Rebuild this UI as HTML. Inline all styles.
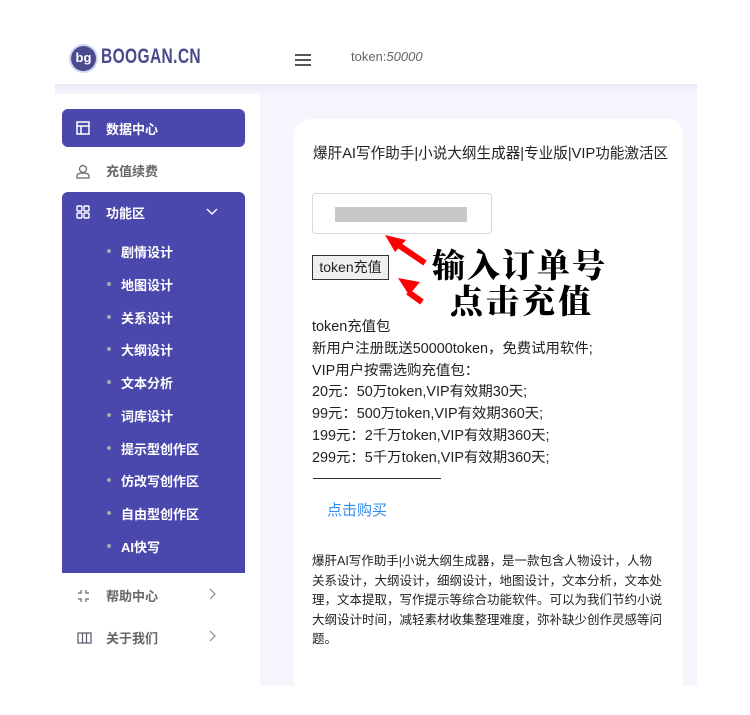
<!DOCTYPE html>
<html><head><meta charset="utf-8"><style>
*{margin:0;padding:0;box-sizing:border-box}
body{width:750px;height:715px;background:#fff;position:relative;overflow:hidden;font-family:"Liberation Sans","Noto Sans CJK SC",sans-serif;color:#222}
.a{position:absolute;white-space:nowrap}
.side{font-size:13px;font-weight:bold}
.sub{color:#fff;font-size:13px;font-weight:bold}
.dot{position:absolute;width:4px;height:4px;border-radius:2px;background:#aaa}
.t{font-size:14.4px;color:#222}
</style></head><body>
<div class="a" style="left:55px;top:84px;width:642px;height:10px;background:linear-gradient(#e9eaf3,#f5f6fd)"></div>
<div class="a" style="left:260px;top:94px;width:437px;height:592px;background:#f5f6fd"></div>
<div class="a" style="left:71px;top:46px;width:25px;height:25px;border-radius:50%;background:#4a4a8c;box-shadow:0 0 0 2px #cfd8f5;color:#fff;font-size:13px;font-weight:bold;text-align:center;line-height:24px">bg</div>
<div class="a" style="left:101px;top:45px;font-size:21px;font-weight:bold;color:#4a4a8c;transform:scaleX(.74);transform-origin:left;letter-spacing:0.5px">BOOGAN.CN</div>
<div class="a" style="left:295px;top:54px;width:16px;height:2px;background:#555;box-shadow:0 5px 0 #555,0 10px 0 #555"></div>
<div class="a" style="left:351px;top:49px;font-size:13px;color:#666">token:<i>50000</i></div>
<div class="a" style="left:62px;top:109px;width:183px;height:38px;background:#4a48ad;border-radius:6px"></div>
<svg class="a" style="left:76px;top:121px" width="14" height="14"><rect x="1" y="1" width="12" height="12" fill="none" stroke="#fff" stroke-width="1.5"/><path d="M1 5H13M5 5V13" stroke="#fff" stroke-width="1.5"/></svg>
<div class="a side" style="left:106px;top:119px;color:#fff">数据中心</div>
<svg class="a" style="left:76px;top:164px" width="14" height="15"><circle cx="7" cy="5" r="3.5" fill="none" stroke="#666" stroke-width="1.2"/><path d="M1 14V12Q1 9 7 9Q13 9 13 12V14Z" fill="none" stroke="#666" stroke-width="1.2"/></svg>
<div class="a side" style="left:106px;top:161px;color:#666">充值续费</div>
<div class="a" style="left:62px;top:192px;width:183px;height:381px;background:#4a48ad;border-radius:6px 6px 0 0"></div>
<svg class="a" style="left:76px;top:205px" width="14" height="14"><g fill="none" stroke="#fff" stroke-width="1.4"><rect x="1" y="1" width="5" height="5" rx="1"/><rect x="8" y="1" width="5" height="5" rx="1"/><rect x="1" y="8" width="5" height="5" rx="1"/><rect x="8" y="8" width="5" height="5" rx="1"/></g></svg>
<div class="a side" style="left:106px;top:203px;color:#fff">功能区</div>
<svg class="a" style="left:206px;top:208px" width="12" height="8"><path d="M1 1L6 6L11 1" fill="none" stroke="#fff" stroke-width="1.4"/></svg>
<div class="dot" style="left:107px;top:249px"></div><div class="a sub" style="left:121px;top:242px">剧情设计</div>
<div class="dot" style="left:107px;top:282px"></div><div class="a sub" style="left:121px;top:275px">地图设计</div>
<div class="dot" style="left:107px;top:315px"></div><div class="a sub" style="left:121px;top:308px">关系设计</div>
<div class="dot" style="left:107px;top:347px"></div><div class="a sub" style="left:121px;top:340px">大纲设计</div>
<div class="dot" style="left:107px;top:380px"></div><div class="a sub" style="left:121px;top:373px">文本分析</div>
<div class="dot" style="left:107px;top:413px"></div><div class="a sub" style="left:121px;top:406px">词库设计</div>
<div class="dot" style="left:107px;top:446px"></div><div class="a sub" style="left:121px;top:439px">提示型创作区</div>
<div class="dot" style="left:107px;top:478px"></div><div class="a sub" style="left:121px;top:471px">仿改写创作区</div>
<div class="dot" style="left:107px;top:511px"></div><div class="a sub" style="left:121px;top:504px">自由型创作区</div>
<div class="dot" style="left:107px;top:544px"></div><div class="a sub" style="left:121px;top:537px">AI快写</div>
<svg class="a" style="left:77px;top:589px" width="13" height="14"><path d="M4 1V4H1M9 1V4H12M4 13V10H1M9 13V10H12" fill="none" stroke="#666" stroke-width="1.2"/></svg>
<div class="a side" style="left:106px;top:586px;color:#666">帮助中心</div>
<svg class="a" style="left:209px;top:588px" width="7" height="12"><path d="M1 1L6 6L1 11" fill="none" stroke="#888" stroke-width="1.2"/></svg>
<svg class="a" style="left:77px;top:632px" width="15" height="12"><rect x="1" y="1" width="13" height="10" fill="none" stroke="#556" stroke-width="1.2"/><path d="M5.5 1V11M9.5 1V11" stroke="#556" stroke-width="1.2"/></svg>
<div class="a side" style="left:106px;top:628px;color:#666">关于我们</div>
<svg class="a" style="left:209px;top:630px" width="7" height="12"><path d="M1 1L6 6L1 11" fill="none" stroke="#888" stroke-width="1.2"/></svg>
<div class="a" style="left:294px;top:119px;width:389px;height:567px;background:#fff;border-radius:16px 16px 0 0"></div>
<div class="a t" style="left:313px;top:142px;font-size:14.6px">爆肝AI写作助手|小说大纲生成器|专业版|VIP功能激活区</div>
<div class="a" style="left:312px;top:193px;width:180px;height:41px;border:1px solid #d5d8de;border-radius:4px"></div>
<div class="a" style="left:335px;top:207px;width:132px;height:15px;background:#c8c8c8"></div>
<div class="a" style="left:312px;top:255px;width:77px;height:25px;border:1px solid #333;background:#efefef;font-size:14px;text-align:center;line-height:23px">token充值</div>
<div class="a" style="left:432px;top:244px;font-family:'Noto Serif CJK SC',serif;font-weight:900;font-size:33px;color:#000;line-height:40px;letter-spacing:2px">输入订单号</div>
<div class="a" style="left:450px;top:280px;font-family:'Noto Serif CJK SC',serif;font-weight:900;font-size:33px;color:#000;line-height:40px;letter-spacing:3px">点击充值</div>
<svg class="a" style="left:380px;top:230px" width="70" height="80"><g stroke="#f00" stroke-width="6" fill="#f00"><path d="M45 33L14 12"/><path d="M42 72L28 62"/></g><path d="M5 5L26 10L15 22Z" fill="#f00"/><path d="M18 48L40 52L29 65Z" fill="#f00"/></svg>
<div class="a t" style="left:312px;top:317px;line-height:21.8px">token充值包<br>新用户注册既送50000token，免费试用软件;<br>VIP用户按需选购充值包：<br>20元：50万token,VIP有效期30天;<br>99元：500万token,VIP有效期360天;<br>199元：2千万token,VIP有效期360天;<br>299元：5千万token,VIP有效期360天;</div>
<div class="a" style="left:313px;top:478px;width:128px;height:1px;background:#333"></div>
<div class="a" style="left:327px;top:499px;font-size:15px;color:#2f8cf0">点击购买</div>
<div class="a" style="left:312px;top:552px;width:352px;white-space:normal;font-size:12.5px;line-height:19.5px;color:#222">爆肝AI写作助手|小说大纲生成器，是一款包含人物设计，人物关系设计，大纲设计，细纲设计，地图设计，文本分析，文本处理，文本提取，写作提示等综合功能软件。可以为我们节约小说大纲设计时间，减轻素材收集整理难度，弥补缺少创作灵感等问题。</div>
</body></html>
